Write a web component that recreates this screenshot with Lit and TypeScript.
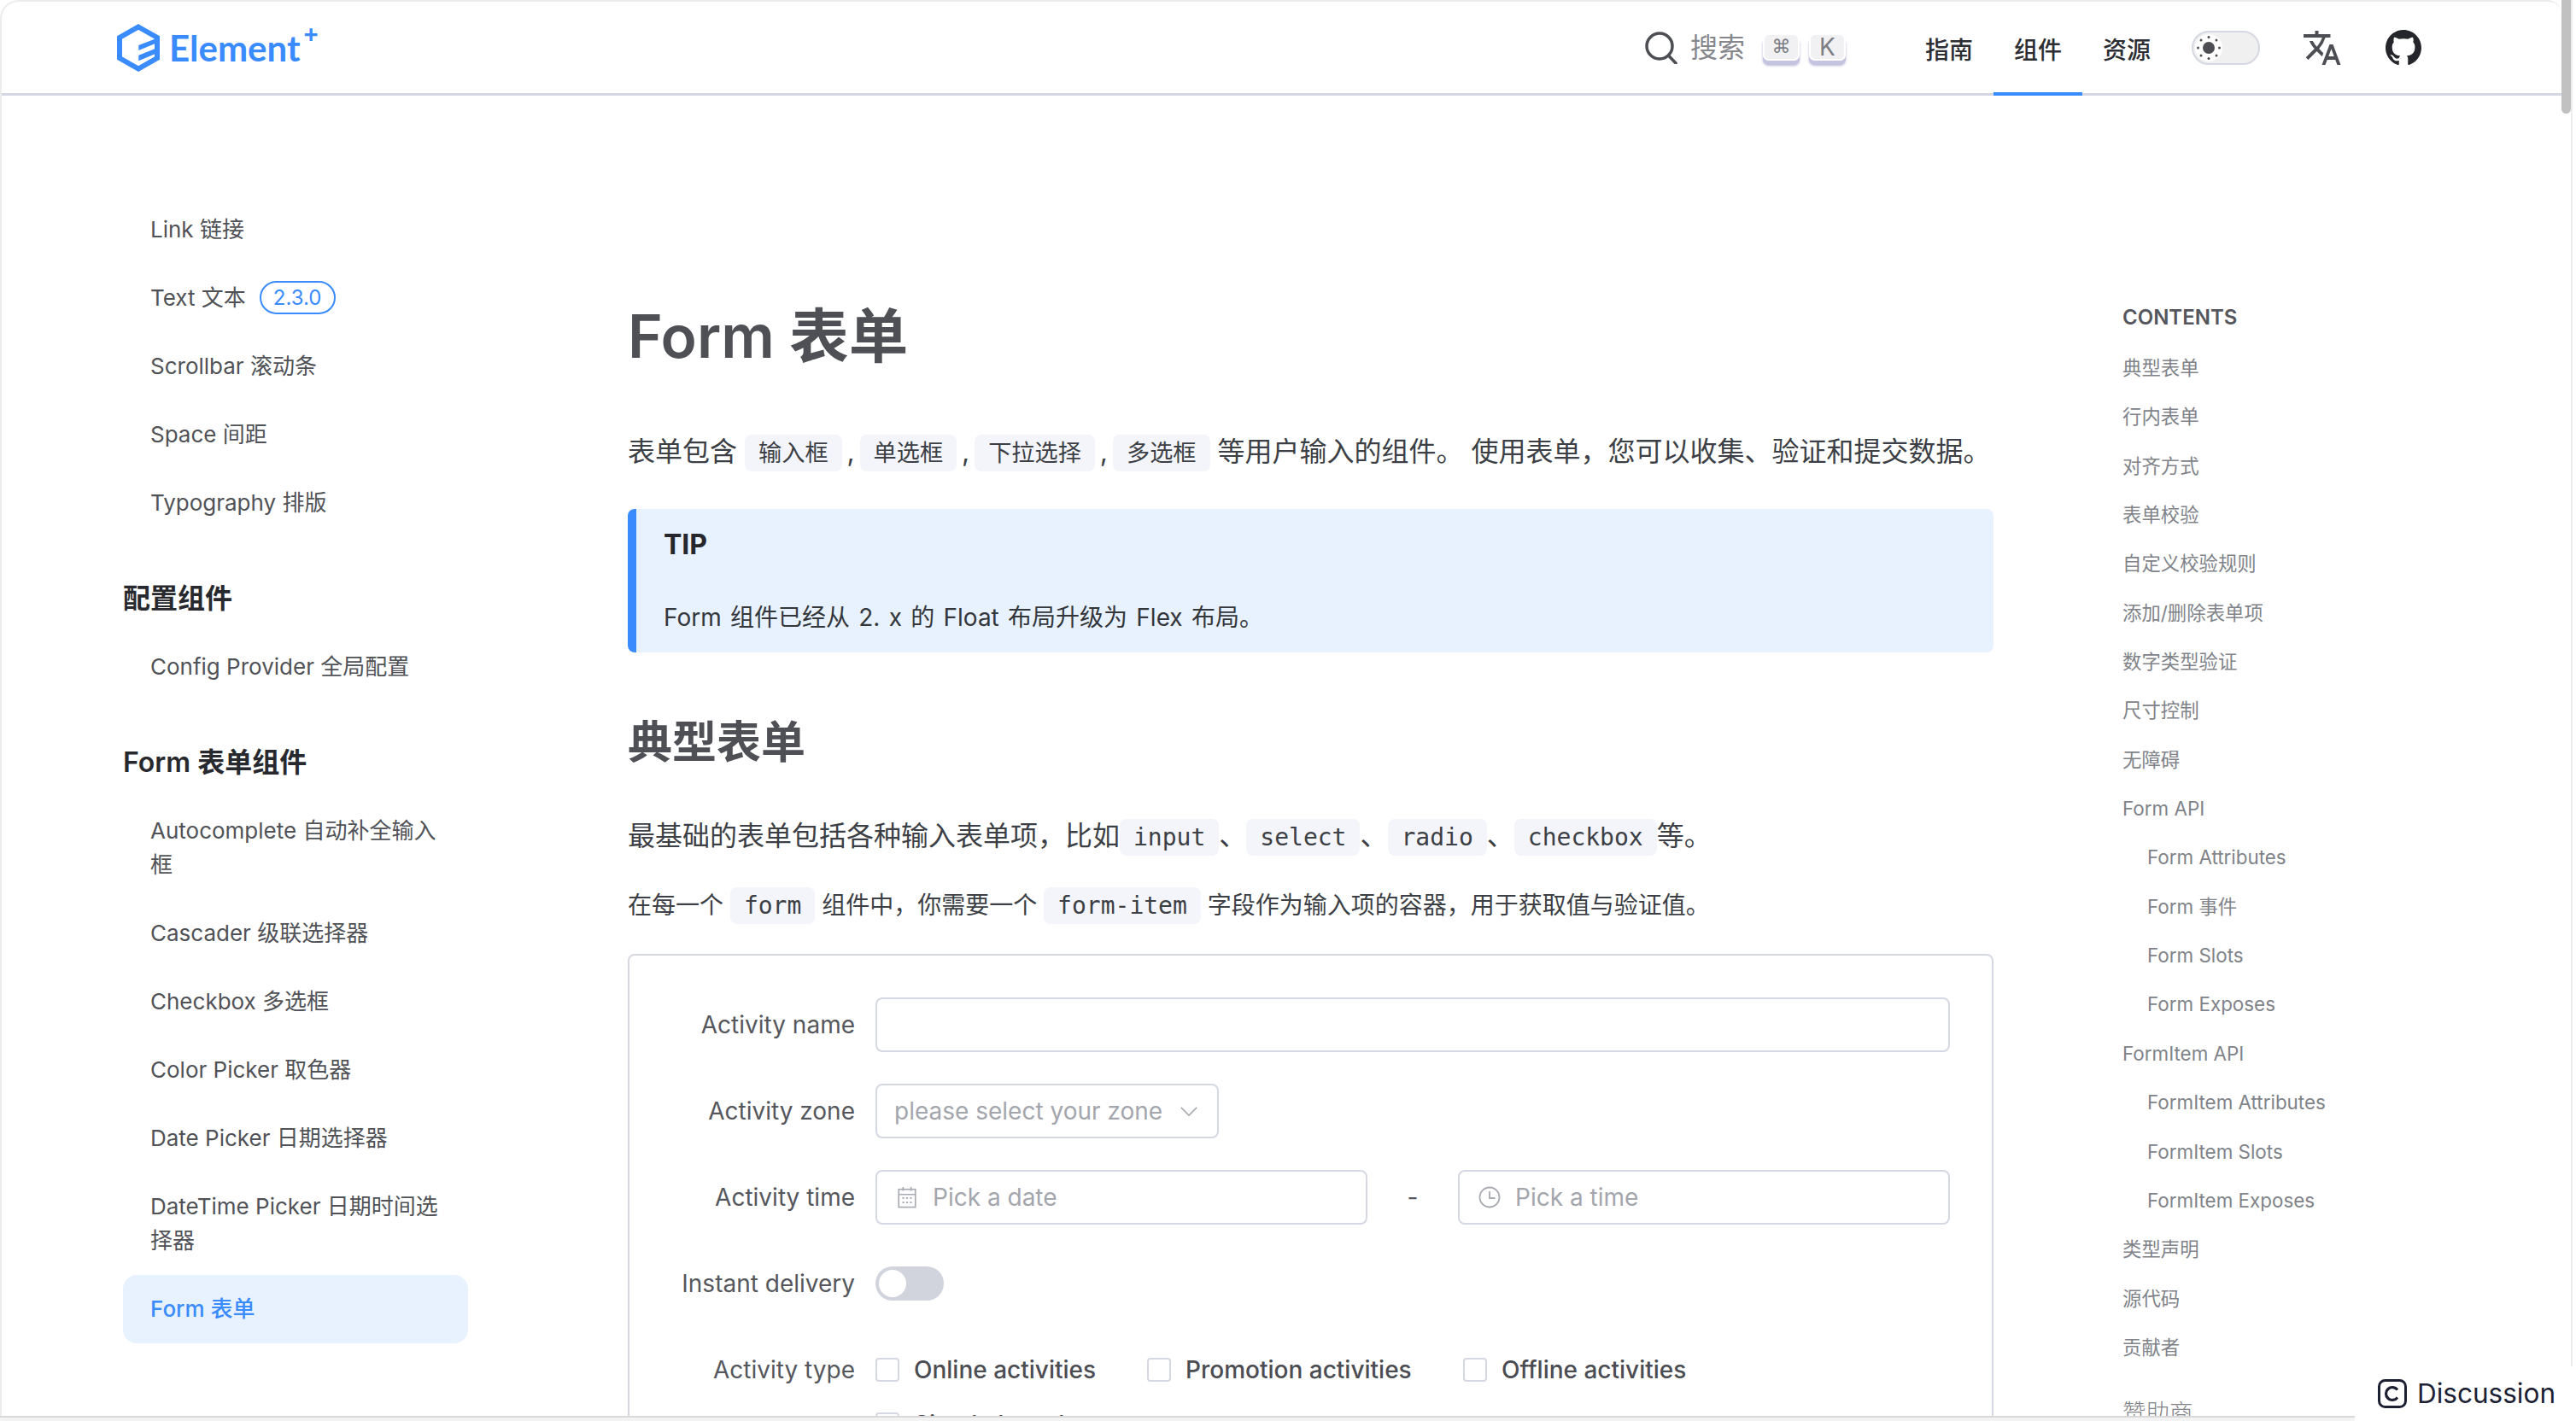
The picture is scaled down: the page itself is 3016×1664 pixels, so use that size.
import { LitElement, html, css, svg, unsafeCSS } from "lit";
import { customElement } from "lit/decorators.js";

const FONT = unsafeCSS(`Inter, "Noto Sans CJK SC", sans-serif`);

const sideA = [
  { t: "Link 链接" },
  { t: "Text 文本", tag: "2.3.0" },
  { t: "Scrollbar 滚动条" },
  { t: "Space 间距" },
  { t: "Typography 排版" },
];
const sideB = [{ t: "Config Provider 全局配置" }];
const sideC = [
  { t: "Autocomplete 自动补全输入框" },
  { t: "Cascader 级联选择器" },
  { t: "Checkbox 多选框" },
  { t: "Color Picker 取色器" },
  { t: "Date Picker 日期选择器" },
  { t: "DateTime Picker 日期时间选择器" },
  { t: "Form 表单", active: true },
];
const toc: [string, boolean][] = [
  ["典型表单", false], ["行内表单", false], ["对齐方式", false], ["表单校验", false],
  ["自定义校验规则", false], ["添加/删除表单项", false], ["数字类型验证", false], ["尺寸控制", false],
  ["无障碍", false], ["Form API", false], ["Form Attributes", true], ["Form 事件", true],
  ["Form Slots", true], ["Form Exposes", true], ["FormItem API", false], ["FormItem Attributes", true],
  ["FormItem Slots", true], ["FormItem Exposes", true], ["类型声明", false], ["源代码", false], ["贡献者", false],
];

const logoMark = svg`<svg class="mark" viewBox="0 0 50 56"><path d="M25 3.500 47 16v24L25 52.500 3 40V16z" fill="none" stroke="#3a8bfd" stroke-width="6" stroke-linejoin="miter"/><path fill="#3a8bfd" d="M25.300 25 46 17v5.500L25.300 31zM25.300 36.700 46 28.500v6L25.300 43.300z"/></svg>`;
const searchIcon = svg`<svg class="search" viewBox="0 0 38 38"><circle cx="17" cy="17" r="15" fill="none" stroke="#4c4e53" stroke-width="3.500"/><path d="M27.500 28 36 37" stroke="#4c4e53" stroke-width="3.500" stroke-linecap="round"/></svg>`;
const sun = svg`<svg class="sun" viewBox="0 0 32 32"><circle cx="16" cy="16" r="7" fill="#4c4e53"/><g fill="#4c4e53"><circle cx="16" cy="3.500" r="1.500"/><circle cx="16" cy="28.500" r="1.500"/><circle cx="3.500" cy="16" r="1.500"/><circle cx="28.500" cy="16" r="1.500"/><circle cx="7" cy="7" r="1.500"/><circle cx="25" cy="7" r="1.500"/><circle cx="7" cy="25" r="1.500"/><circle cx="25" cy="25" r="1.500"/></g></svg>`;
const translate = svg`<svg class="translate" viewBox="1.500 2 21.500 20"><path fill="#4c4e53" d="M12.870 15.070l-2.540-2.510.03-.03A17.520 17.520 0 0 0 14.070 6H17V4h-7V2H8v2H1v2h11.170C11.500 7.920 10.440 9.750 9 11.350 8.070 10.320 7.300 9.190 6.690 8h-2c.73 1.630 1.730 3.170 2.980 4.560l-5.090 5.020L4 19l5-5 3.110 3.110.76-2.040zM18.500 10h-2L12 22h2l1.120-3h4.750L21 22h2l-4.500-12zm-2.620 7l1.620-4.330L19.120 17h-3.240z"/></svg>`;
const github = svg`<svg class="github" viewBox="0 0 16 16"><path fill="#24262b" d="M8 0C3.580 0 0 3.580 0 8c0 3.540 2.290 6.530 5.470 7.590.4.070.55-.17.55-.38 0-.19-.01-.82-.01-1.490-2.010.37-2.530-.49-2.690-.94-.09-.23-.48-.94-.82-1.130-.28-.15-.68-.52-.01-.53.63-.01 1.080.58 1.230.82.72 1.210 1.870.87 2.330.66.070-.52.28-.87.51-1.070-1.780-.2-3.640-.89-3.640-3.950 0-.87.31-1.590.82-2.150-.08-.2-.36-1.020.08-2.120 0 0 .67-.21 2.200.82.64-.18 1.320-.27 2-.27s1.360.09 2 .27c1.530-1.040 2.200-.82 2.200-.82.44 1.100.16 1.920.08 2.120.51.56.82 1.270.82 2.150 0 3.070-1.870 3.750-3.650 3.950.29.25.54.73.54 1.480 0 1.070-.01 1.930-.01 2.200 0 .21.15.46.55.38A8.010 8.010 0 0 0 16 8c0-4.420-3.580-8-8-8z"/></svg>`;
const calendar = svg`<svg class="fi" viewBox="0 0 24 28"><g fill="none" stroke="#a8abb2" stroke-width="1.800"><rect x="1.500" y="4" width="21" height="22.500"/><path d="M1.500 10.500h21M7 1v5M17 1v5"/></g><g fill="#a8abb2"><rect x="6" y="14" width="2.400" height="2"/><rect x="10.800" y="14" width="2.400" height="2"/><rect x="15.600" y="14" width="2.400" height="2"/><rect x="6" y="19.500" width="2.400" height="2"/><rect x="10.800" y="19.500" width="2.400" height="2"/><rect x="15.600" y="19.500" width="2.400" height="2"/></g></svg>`;
const clock = svg`<svg class="fi" viewBox="0 0 26 26"><g fill="none" stroke="#a8abb2" stroke-width="1.800"><circle cx="13" cy="13" r="11.500"/><path d="M13 6v8h6.500"/></g></svg>`;
const chevron = svg`<svg class="chev" viewBox="0 0 24 14"><path d="M2 2l10 10L22 2" fill="none" stroke="#a8abb2" stroke-width="1.800"/></svg>`;
const discuss = svg`<svg class="dicon" viewBox="0 0 34 34"><rect x="1.500" y="1.500" width="31" height="31" rx="7" fill="none" stroke="#1c2033" stroke-width="3"/><path d="M23 12.500a7.500 7.500 0 1 0 0 9" fill="none" stroke="#1c2033" stroke-width="3.200"/></svg>`;

@customElement("app-root")
export class AppRoot extends LitElement {
  static styles = css`
    :host { display: block; width: 3016px; height: 1664px; overflow: hidden; position: relative; background: #fff; font-family: ${FONT}; }
    * { box-sizing: border-box; }
    .shell { display: flex; height: 1658px; }
    .page { width: 2999px; height: 1658px; overflow: hidden; border-top: 2px solid #ececec; border-left: 2px solid #ececec; border-radius: 22px 16px 0 0; background: #fff; display: flex; flex-direction: column; }
    .track { width: 11px; flex: none; }
    .thumb { width: 11px; height: 133px; background: #c1c1c1; border-radius: 0 0 6px 6px; }
    .edge { flex: 1; border-left: 2px solid #ededed; }
    .strip { height: 6px; background: #f3f3f3; border-top: 2px solid #d9d9d9; }

    header { height: 110px; flex: none; border-bottom: 3px solid #d5d8e2; display: flex; align-items: center; position: relative; padding-left: 135px; }
    .logo { display: flex; align-items: center; gap: 11px; color: #3a8bfd; position: relative; }
    .mark { width: 50px; height: 56px; display: block; }
    .logotext { font-family: Lato, sans-serif; font-size: 42px; font-weight: 700; line-height: 56px; }
    .logoplus { font-size: 30px; font-weight: 700; line-height: 20px; position: relative; top: -16px; left: -7px; font-family: "Noto Sans", sans-serif; }
    .spacer { flex: 1; }
    .searchbox { display: flex; align-items: center; }
    .search { width: 38px; height: 38px; display: block; margin-right: 15px; }
    .stext { font-size: 32px; color: #85878d; line-height: 40px; width: 85px; }
    .kbd { width: 43px; height: 32px; margin-right: 11px; margin-bottom: 2px; background: #f1f1f3; border-radius: 7px; color: #7c7e84; font-size: 28px; display: flex; align-items: center; justify-content: center; box-shadow: inset 0 0 0 2px #fff, 0 5px 0 #c4c3e0, 0 6px 3px #b9b8d8; }
    .kbd.cmd { font-size: 22px; font-family: "DejaVu Sans", sans-serif; }
    nav { display: flex; margin-left: 58px; height: 107px; margin-right: 24px; }
    nav a { width: 104px; height: 110px; display: flex; align-items: center; justify-content: center; font-size: 28px; font-weight: 500; color: #2c2e33; position: relative; }
    nav a.on { border-bottom: 4px solid #3a8bfd; padding-top: 4px; }
    .toggle { width: 80px; height: 40px; border-radius: 20px; background: #f0f0f1; border: 2px solid #d5d8e2; padding: 2px; display: block; margin-right: 51px; }
    .knob { width: 32px; height: 32px; border-radius: 50%; background: #fff; display: block; }
    .sun { width: 32px; height: 32px; display: block; }
    .translate { width: 44px; height: 40px; display: block; margin-right: 52px; }
    .github { width: 42px; height: 42px; display: block; margin-right: 164px; }

    .body { display: flex; flex: 1; min-height: 0; overflow: hidden; }

    aside { width: 733px; flex: none; padding: 117px 0 0 142px; }
    .sitem { width: 404px; padding: 20px 32px; font-size: 26px; line-height: 40px; color: #505257; border-radius: 16px; display: block; }
    .sitem.active { background: #e8f2ff; color: #3a8bfd; font-weight: 500; }
    .sitem .tag { display: inline-flex; align-items: center; height: 39px; padding: 0 14px; margin-left: 16px; border: 2px solid #3a8bfd; border-radius: 20px; color: #3a8bfd; font-size: 24px; line-height: 35px; vertical-align: 1px; }
    .stitle { font-size: 32px; font-weight: 600; color: #27292e; line-height: 80px; margin-top: 32px; }

    main { width: 1599px; flex: none; padding-top: 238px; }
    h1 { margin: 0; font-size: 69.500px; font-weight: 600; line-height: 88px; color: #4e5056; }
    p { margin: 0; color: #3c3f45; font-size: 32px; line-height: 56px; white-space: nowrap; }
    p.small { font-size: 28px; }
    .p1 { margin-top: 63px; }
    .p2 { margin-top: 45px; }
    .p3 { margin-top: 25px; }
    .sep { display: inline-block; width: 21px; text-align: center; }
    code { display: inline-block; background: #f3f5fa; border-radius: 8px; padding: 0 16px; height: 43px; line-height: 43px; font-size: 28px; color: #3c3f45; vertical-align: 0px; font-family: "DejaVu Sans Mono", "Noto Sans CJK SC", monospace; }
    code.cn { font-family: ${FONT}; font-size: 27.200px; }
    .tip { margin-top: 39px; height: 168px; background: #e8f2ff; border-left: 10px solid #3a8bfd; border-radius: 8px; padding: 14px 0 0 32px; }
    .tiptitle { font-size: 32px; font-weight: 700; line-height: 56px; color: #25272c; }
    .tipbody { font-size: 28px; line-height: 56px; margin-top: 29px; color: #33363b; word-spacing: 2.400px; }
    h2 { margin: 70px 0 0; font-size: 52px; font-weight: 600; line-height: 72px; color: #4e5056; }

    .card { margin-top: 29px; height: 900px; border: 2px solid #d5d8e2; border-radius: 8px; padding: 49px 49px 0 0; }
    .row { display: flex; align-items: center; height: 64px; margin-bottom: 37px; }
    .row.top { align-items: flex-start; }
    .label { width: 288px; flex: none; padding-right: 24px; text-align: right; font-size: 28px; color: #55575d; line-height: 64px; }
    .ctrl { height: 64px; border: 2px solid #d5d8e2; border-radius: 8px; display: flex; align-items: center; background: #fff; color: #a3a6ad; font-size: 28px; }
    .full { flex: 1; }
    .select { width: 402px; padding: 0 22px 0 20px; justify-content: space-between; }
    .chev { width: 22px; height: 13px; display: block; }
    .datec { width: 576px; padding-left: 22px; }
    .timec { flex: 1; padding-left: 22px; }
    .fi { width: 26px; height: 26px; display: block; margin-right: 17px; }
    .dash { width: 106px; text-align: center; color: #55575d; font-size: 28px; }
    .switch { width: 80px; height: 40px; border-radius: 20px; background: #d1d4dd; padding: 4px; }
    .dot { width: 32px; height: 32px; border-radius: 50%; background: #fff; }
    .checks { display: flex; flex-wrap: wrap; flex: 1; }
    .check { display: flex; align-items: center; height: 64px; font-size: 28px; font-weight: 500; color: #4b4d53; }
    .box { width: 28px; height: 28px; border: 2px solid #d5d8e2; border-radius: 4px; background: #fff; margin-right: 17px; }
    .c1 { width: 318px; } .c2 { width: 370px; } .c3 { width: 400px; } .c4 { width: 500px; }

    .toc { padding: 240px 0 0 151px; flex: 1; }
    .toct { font-size: 24px; font-weight: 600; color: #55575d; line-height: 40px; margin-bottom: 10px; }
    .ti { font-size: 22.400px; line-height: 57.350px; height: 57.350px; color: #808389; white-space: nowrap; }
    .ti.sub { padding-left: 29px; }
    .tilast { font-size: 27.500px; font-weight: 300; color: #808389; line-height: 40px; margin-top: 28px; }

    .disc { position: absolute; right: 0; bottom: 0; width: 259px; height: 64px; background: #fff; display: flex; align-items: center; padding: 0 0 1px 27px; gap: 12px; font-size: 31.500px; color: #1c2033; }
    .dicon { width: 34px; height: 34px; display: block; }
  `;

  private sideItem(i: { t: string; tag?: string; active?: boolean }) {
    return html`<div class="sitem ${i.active ? "active" : ""}">${i.t}${i.tag ? html`<span class="tag">${i.tag}</span>` : ""}</div>`;
  }

  render() {
    return html`
      <div class="shell">
        <div class="page">
          <header>
            <div class="logo">${logoMark}<span class="logotext">Element</span><span class="logoplus">+</span></div>
            <div class="spacer"></div>
            <div class="searchbox">
              ${searchIcon}<span class="stext">搜索</span>
              <span class="kbd cmd">⌘</span><span class="kbd">K</span>
            </div>
            <nav><a>指南</a><a class="on">组件</a><a>资源</a></nav>
            <span class="toggle"><span class="knob">${sun}</span></span>
            ${translate}${github}
          </header>
          <div class="body">
            <aside>
              ${sideA.map((i) => this.sideItem(i))}
              <div class="stitle">配置组件</div>
              ${sideB.map((i) => this.sideItem(i))}
              <div class="stitle">Form 表单组件</div>
              ${sideC.map((i) => this.sideItem(i))}
            </aside>
            <main>
              <h1>Form 表单</h1>
              <p class="p1">表单包含 <code class="cn">输入框</code><span class="sep">,</span><code class="cn">单选框</code><span class="sep">,</span><code class="cn">下拉选择</code><span class="sep">,</span><code class="cn">多选框</code> 等用户输入的组件。 使用表单，您可以收集、验证和提交数据。</p>
              <div class="tip">
                <div class="tiptitle">TIP</div>
                <div class="tipbody">Form 组件已经从 2. x 的 Float 布局升级为 Flex 布局。</div>
              </div>
              <h2>典型表单</h2>
              <p class="p2">最基础的表单包括各种输入表单项，比如<code>input</code>、<code>select</code>、<code>radio</code>、<code>checkbox</code>等。</p>
              <p class="p3 small">在每一个 <code>form</code> 组件中，你需要一个 <code>form-item</code> 字段作为输入项的容器，用于获取值与验证值。</p>
              <div class="card">
                <div class="row"><div class="label">Activity name</div><div class="ctrl full"></div></div>
                <div class="row"><div class="label">Activity zone</div><div class="ctrl select"><span>please select your zone</span>${chevron}</div></div>
                <div class="row"><div class="label">Activity time</div><div class="ctrl datec">${calendar}<span>Pick a date</span></div><div class="dash">-</div><div class="ctrl timec">${clock}<span>Pick a time</span></div></div>
                <div class="row"><div class="label">Instant delivery</div><div class="switch"><div class="dot"></div></div></div>
                <div class="row top"><div class="label">Activity type</div>
                  <div class="checks">
                    <div class="check c1"><span class="box"></span>Online activities</div>
                    <div class="check c2"><span class="box"></span>Promotion activities</div>
                    <div class="check c3"><span class="box"></span>Offline activities</div>
                    <div class="check c4"><span class="box"></span>Simple brand exposure</div>
                  </div>
                </div>
              </div>
            </main>
            <div class="toc">
              <div class="toct">CONTENTS</div>
              ${toc.map(([t, s]) => html`<div class="ti ${s ? "sub" : ""}">${t}</div>`)}
              <div class="tilast">赞助商</div>
            </div>
          </div>
        </div>
        <div class="track"><div class="thumb"></div></div>
        <div class="edge"></div>
      </div>
      <div class="strip"></div>
      <div class="disc">${discuss}<span>Discussion</span></div>
    `;
  }
}
